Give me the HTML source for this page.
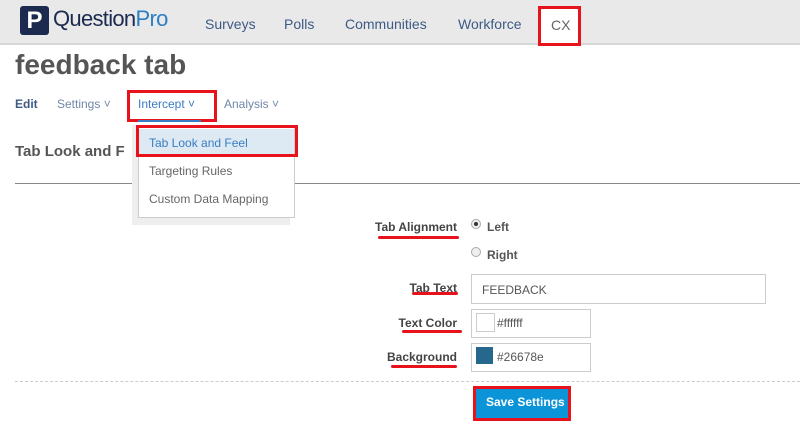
<!DOCTYPE html><html><head><style>
body{margin:0;width:800px;height:422px;overflow:hidden;background:#fff;font-family:"Liberation Sans",sans-serif;position:relative}
.a{position:absolute}
.hdr{left:0;top:0;width:800px;height:43px;background:#e9e9e9;border-bottom:2px solid #d6d6d6}
.nav{font-size:14px;color:#3d5a86;top:16px}
.red{border:3px solid #e8121c;box-sizing:border-box}
.lbl{font-size:12px;font-weight:bold;color:#444;text-align:right;right:343px;white-space:nowrap}
.ul{height:3px;background:#e8121c;border-radius:2px}
.inp{border:1px solid #ccc;box-sizing:border-box;background:#fff;font-size:12px;color:#555}
</style></head><body>
<div class="a hdr"></div>
<div class="a" style="left:20px;top:6px;width:29px;height:29px;background:#1b2a4e;border-radius:3px;color:#fff;font-weight:bold;font-size:24px;line-height:29px;text-align:center">P</div>
<div class="a" style="left:53px;top:6px;font-size:22px;color:#1b2a4e;letter-spacing:-0.7px">Question<span style="color:#2a7fc4">Pro</span></div>
<div class="a nav" style="left:205px">Surveys</div>
<div class="a nav" style="left:284px">Polls</div>
<div class="a nav" style="left:345px">Communities</div>
<div class="a nav" style="left:458px">Workforce</div>
<div class="a red" style="left:538px;top:6px;width:43px;height:40px;background:#fff"></div>
<div class="a" style="left:551px;top:17px;font-size:14px;color:#666">CX</div>
<div class="a" style="left:15px;top:49px;font-size:28px;font-weight:bold;color:#555">feedback tab</div>
<div class="a" style="left:15px;top:97px;font-size:12px;color:#3d5a86;font-weight:bold">Edit</div>
<div class="a" style="left:57px;top:97px;font-size:12px;color:#7088a8">Settings ˅</div>
<div class="a red" style="left:127px;top:90px;width:90px;height:32px"></div>
<div class="a" style="left:138px;top:97px;font-size:12px;color:#3a7cc4">Intercept ˅</div>
<div class="a" style="left:138px;top:120px;width:63px;height:2px;background:#3a7cc4"></div>
<div class="a" style="left:224px;top:97px;font-size:12px;color:#7088a8">Analysis ˅</div>
<div class="a" style="left:15px;top:143px;font-size:15px;font-weight:bold;color:#555">Tab Look and F</div>
<div class="a" style="left:15px;top:183px;width:785px;height:1px;background:#888"></div>
<div class="a" style="left:132px;top:125px;width:158px;height:100px;background:#eee"></div>
<div class="a" style="left:138px;top:127px;width:157px;height:91px;background:#fff;border:1px solid #ccc;box-sizing:border-box"></div>
<div class="a" style="left:139px;top:129px;width:155px;height:26px;background:#dde9f3"></div>
<div class="a red" style="left:136px;top:125px;width:162px;height:32px"></div>
<div class="a" style="left:149px;top:136px;font-size:12px;color:#3a7cc4">Tab Look and Feel</div>
<div class="a" style="left:149px;top:164px;font-size:12px;color:#666">Targeting Rules</div>
<div class="a" style="left:149px;top:192px;font-size:12px;color:#666">Custom Data Mapping</div>
<div class="a lbl" style="top:220px">Tab Alignment</div>
<div class="a ul" style="left:378px;top:236px;width:81px"></div>
<div class="a" style="left:471px;top:219px;width:10px;height:10px;border:1px solid #aaa;border-radius:50%;background:#eee;box-sizing:border-box"></div>
<div class="a" style="left:474px;top:222px;width:4px;height:4px;border-radius:50%;background:#333"></div>
<div class="a" style="left:487px;top:220px;font-size:12px;font-weight:bold;color:#555">Left</div>
<div class="a" style="left:471px;top:247px;width:10px;height:10px;border:1px solid #aaa;border-radius:50%;background:#eee;box-sizing:border-box"></div>
<div class="a" style="left:487px;top:248px;font-size:12px;font-weight:bold;color:#555">Right</div>
<div class="a lbl" style="top:281px">Tab Text</div>
<div class="a ul" style="left:412px;top:292px;width:46px"></div>
<div class="a inp" style="left:471px;top:274px;width:295px;height:30px;padding:8px 10px">FEEDBACK</div>
<div class="a lbl" style="top:316px">Text Color</div>
<div class="a ul" style="left:402px;top:330px;width:60px"></div>
<div class="a inp" style="left:471px;top:309px;width:120px;height:29px"></div>
<div class="a" style="left:476px;top:313px;width:17px;height:17px;border:1px solid #ccc;background:#fff"></div>
<div class="a" style="left:497px;top:316px;font-size:12px;color:#555">#ffffff</div>
<div class="a lbl" style="top:350px">Background</div>
<div class="a ul" style="left:391px;top:365px;width:66px"></div>
<div class="a inp" style="left:471px;top:343px;width:120px;height:29px"></div>
<div class="a" style="left:476px;top:347px;width:17px;height:17px;background:#26678e"></div>
<div class="a" style="left:497px;top:350px;font-size:12px;color:#555">#26678e</div>
<div class="a" style="left:15px;top:381px;width:785px;border-top:1px dashed #ccc"></div>
<div class="a red" style="left:473px;top:386px;width:98px;height:35px;background:#0b94d8"></div>
<div class="a" style="left:486px;top:395px;font-size:12px;font-weight:bold;color:#fff">Save Settings</div>
</body></html>
